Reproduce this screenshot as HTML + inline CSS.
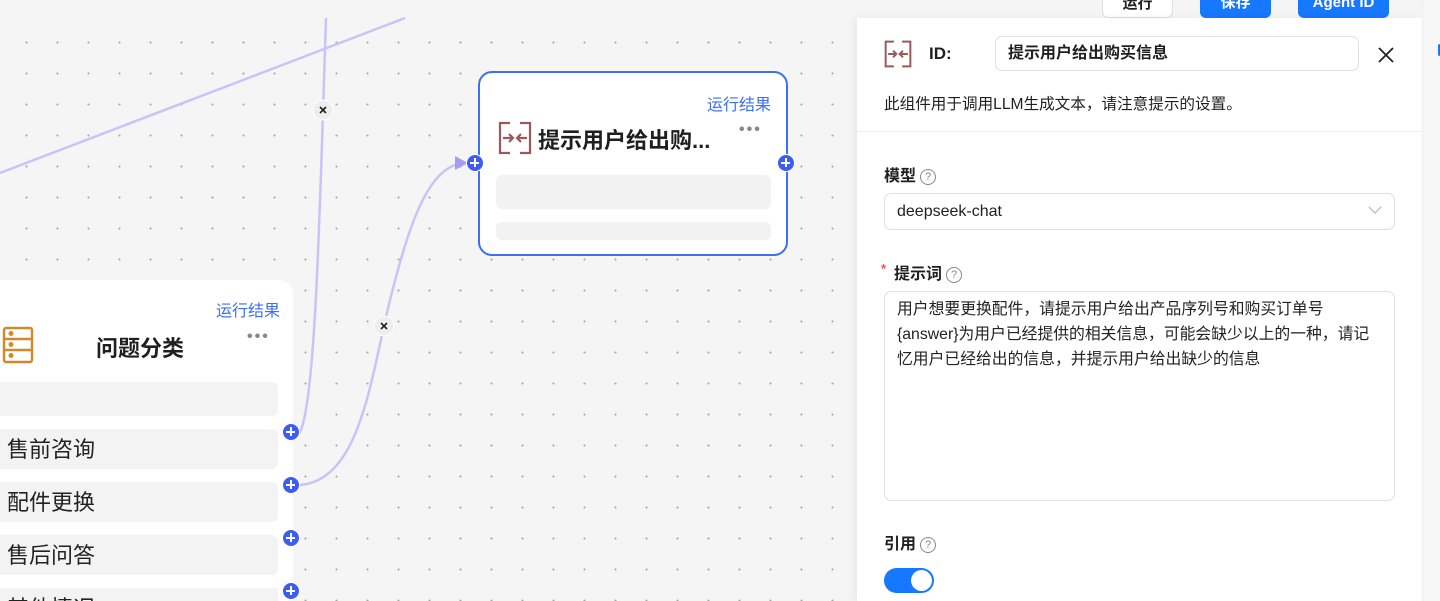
<!DOCTYPE html>
<html style="overflow:hidden;width:1440px;height:601px"><head><meta charset="utf-8"><style>
*{box-sizing:border-box;margin:0;padding:0}
body{width:1440px;height:601px;overflow:hidden;position:relative;background:#f5f5f5;font-family:"Liberation Sans","Noto Sans CJK SC",sans-serif;color:#1f1f1f}
.canvas{position:absolute;left:0;top:18px;width:860px;height:583px;background-image:radial-gradient(circle,#a8a8a8 0.9px,transparent 1.2px);background-size:31px 31px;background-position:11px 9px}
.btn{position:absolute;top:-12px;height:30px;border-radius:6px;font-size:15px;font-weight:bold;text-align:center;line-height:30px}
.node{position:absolute;background:#fff;border-radius:14px;overflow:hidden}
.blue{color:#3b6ff5}
.plus{position:absolute;width:18px;height:18px;border-radius:50%;background:#3d5cf5;border:1.5px solid #fff}
.plus:before{content:"";position:absolute;left:3px;top:7.2px;width:9px;height:1.8px;background:#fff}
.plus:after{content:"";position:absolute;top:3px;left:7.2px;height:9px;width:1.8px;background:#fff}
.dots{position:absolute;font-size:16px;color:#888;letter-spacing:2px;font-weight:bold}
.bar{position:absolute;background:#f2f2f2;border-radius:6px}
.item{position:absolute;left:0;width:278px;height:40px;background:#f3f3f3;border-radius:0 6px 6px 0;font-size:22px;line-height:42px;padding-left:7px;color:#222}
.panel{position:absolute;left:857px;top:18px;width:565px;height:583px;background:#fff;box-shadow:-3px 0 8px rgba(0,0,0,.06);overflow:hidden}
.lbl{position:absolute;left:27px;font-size:16px;font-weight:bold}
.q{display:inline-block;width:16px;height:16px;border:1px solid #888;border-radius:50%;font-size:11px;line-height:14px;text-align:center;color:#888;font-weight:normal;vertical-align:1px;margin-left:4px}
.box{position:absolute;left:27px;width:511px;border:1px solid #e0e0e0;border-radius:7px;background:#fff}
</style></head><body>
<div class="canvas"></div>
<div class="btn" style="left:1102px;width:71px;background:#fff;border:1px solid #ddd;color:#222">运行</div>
<div class="btn" style="left:1200px;width:71px;background:#1677ff;color:#fff">保存</div>
<div class="btn" style="left:1298px;width:91px;background:#1677ff;color:#fff">Agent ID</div>

<svg style="position:absolute;left:0;top:0" width="860" height="601">
<g fill="none" stroke="#c9c3f7" stroke-width="2.5">
<path d="M0 173 L405 18"/>
<path d="M326 18 C 320 200, 316 400, 300 432 L291 432"/>
<path d="M291 485 C 360 490, 370 380, 390 300 C 410 220, 430 163, 466 163"/>
</g>
<path d="M455 156 L468 163 L455 170 Z" fill="#a89cf2"/>
<circle cx="323" cy="110" r="10" fill="#eee" stroke="#fff" stroke-width="1"/>
<path d="M320 107 l6 6 M326 107 l-6 6" stroke="#222" stroke-width="1.6"/>
<circle cx="384" cy="326" r="10" fill="#eee" stroke="#fff" stroke-width="1"/>
<path d="M381 323 l6 6 M387 323 l-6 6" stroke="#222" stroke-width="1.6"/>
</svg>

<div class="node" style="left:478px;top:71px;width:310px;height:185px;border:2px solid #3b6ff5">
<div class="blue" style="position:absolute;right:15px;top:18px;font-size:16px">运行结果</div>
<svg style="position:absolute;left:18px;top:48px" width="34" height="34" viewBox="0 0 34 34" fill="none" stroke="#9a5a5a" stroke-width="2.2"><path d="M12 2H2v30h10M22 2h10v30H22M5 17h10M11 13l4 4-4 4M29 17H19M23 13l-4 4 4 4"/></svg>
<div style="position:absolute;left:58px;top:50px;font-size:22px;font-weight:bold">提示用户给出购...</div>
<div class="dots" style="left:259px;top:48px">•••</div>
<div class="bar" style="left:16px;top:102px;width:275px;height:34px"></div>
<div class="bar" style="left:16px;top:149px;width:275px;height:18px"></div>
</div>
<div class="plus" style="left:466px;top:154px"></div>
<div class="plus" style="left:777px;top:154px"></div>

<div class="node" style="left:-20px;top:280px;width:313px;height:321px;border-radius:14px 14px 0 0">
<div class="blue" style="position:absolute;left:236px;top:17px;font-size:16px">运行结果</div>
<svg style="position:absolute;left:22px;top:46px" width="32" height="38" viewBox="0 0 32 38" fill="none" stroke="#d4882a" stroke-width="2.4"><rect x="2" y="2" width="28" height="34" rx="2"/><path d="M2 13h28M2 24h28"/><circle cx="9" cy="7.5" r="1.3" fill="#d4882a"/><circle cx="9" cy="18.5" r="1.3" fill="#d4882a"/><circle cx="9" cy="29.5" r="1.3" fill="#d4882a"/></svg>
<div style="position:absolute;left:116px;top:51px;font-size:22px;font-weight:bold">问题分类</div>
<div class="dots" style="left:267px;top:48px">•••</div>
</div>
<div class="item" style="top:382px;height:34px"></div>
<div class="item" style="top:429px">售前咨询</div>
<div class="item" style="top:482px">配件更换</div>
<div class="item" style="top:535px">售后问答</div>
<div class="item" style="top:588px;height:13px;border-radius:0;overflow:hidden;line-height:42px">其他情况</div>
<div class="plus" style="left:282px;top:423px"></div>
<div class="plus" style="left:282px;top:476px"></div>
<div class="plus" style="left:282px;top:529px"></div>
<div class="plus" style="left:282px;top:582px"></div>

<div class="panel">
<svg style="position:absolute;left:27px;top:22px" width="28" height="28" viewBox="0 0 34 34" fill="none" stroke="#9a5a5a" stroke-width="2.4"><path d="M12 2H2v30h10M22 2h10v30H22M5 17h10M11 13l4 4-4 4M29 17H19M23 13l-4 4 4 4"/></svg>
<div style="position:absolute;left:72px;top:26px;font-size:17px;font-weight:bold">ID:</div>
<div class="box" style="left:138px;top:18px;width:364px;height:35px;padding-left:12px;font-size:16px;font-weight:bold;line-height:33px">提示用户给出购买信息</div>
<svg style="position:absolute;left:521px;top:29px" width="16" height="16"><path d="M1 1L15 15M15 1L1 15" stroke="#222" stroke-width="1.8"/></svg>
<div style="position:absolute;left:27px;top:74px;font-size:15.6px">此组件用于调用LLM生成文本，请注意提示的设置。</div>
<div style="position:absolute;left:0;top:113px;width:565px;height:1px;background:#eee"></div>
<div class="lbl" style="top:144px">模型<span class="q">?</span></div>
<div class="box" style="top:175px;height:37px;padding-left:12px;font-size:16px;line-height:35px">deepseek-chat
<svg style="position:absolute;right:12px;top:12px" width="14" height="9"><path d="M1 1l6 6 6-6" stroke="#bbb" stroke-width="1.3" fill="none"/></svg></div>
<div class="lbl" style="top:242px"><span style="color:#ff4d4f;position:absolute;left:-3px;top:1px;font-size:13px">*</span><span style="margin-left:10px">提示词</span><span class="q">?</span></div>
<div class="box" style="top:273px;height:210px;padding:5px 12px;font-size:15.8px;line-height:25px;color:#222;white-space:nowrap">用户想要更换配件，请提示用户给出产品序列号和购买订单号<br>{answer}为用户已经提供的相关信息，可能会缺少以上的一种，请记<br>忆用户已经给出的信息，并提示用户给出缺少的信息</div>
<div class="lbl" style="top:512px">引用<span class="q">?</span></div>
<div style="position:absolute;left:27px;top:550px;width:50px;height:25px;border-radius:13px;background:#1677ff"><div style="position:absolute;right:2px;top:2px;width:21px;height:21px;border-radius:50%;background:#fff"></div></div>
</div>
<div style="position:absolute;left:1422px;top:0;width:18px;height:601px;background:#f7f7f7;border-left:1px solid #eee"></div>
<div style="position:absolute;left:1438px;top:44px;width:4px;height:12px;background:#1677ff;border-radius:2px"></div>
</body></html>
